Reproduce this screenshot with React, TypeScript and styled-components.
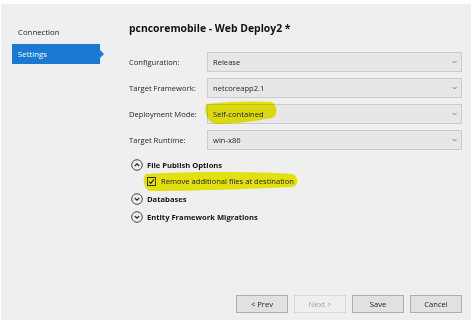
import React from 'react';
import styled, { createGlobalStyle } from 'styled-components';

const GlobalStyle = createGlobalStyle`
  html, body {
    margin: 0;
    padding: 0;
    background: #ffffff;
  }
  body {
    font-family: 'Open Sans', 'Noto Sans', sans-serif;
    color: #1a1a1a;
  }
`;

const Page = styled.div`
  position: relative;
  width: 474px;
  height: 323px;
  padding: 4px 3px 3px 1px;
  box-sizing: border-box;
`;

const Window = styled.div`
  display: grid;
  grid-template-columns: 110px 1fr;
  height: 100%;
  background: #efefef;
`;

const Sidebar = styled.nav`
  display: flex;
  flex-direction: column;
  gap: 2px;
  padding: 18px 0 0 11px;
`;

const NavItem = styled.div<{ $active?: boolean }>`
  position: relative;
  width: 88px;
  height: 20px;
  display: flex;
  align-items: center;
  padding-left: 6px;
  box-sizing: border-box;
  font-size: 7.8px;
  color: ${(p) => (p.$active ? '#ffffff' : '#222222')};
  background: ${(p) => (p.$active ? '#1a7ad2' : 'transparent')};

  &::after {
    content: '';
    display: ${(p) => (p.$active ? 'block' : 'none')};
    position: absolute;
    right: -4px;
    top: 6px;
    border-left: 4px solid #1a7ad2;
    border-top: 4px solid transparent;
    border-bottom: 4px solid transparent;
  }
`;

const Main = styled.main`
  display: flex;
  flex-direction: column;
  padding: 18px 9px 7px 18px;
`;

const Title = styled.h1`
  margin: 0 0 18px;
  font-size: 10.4px;
  font-weight: 700;
  line-height: 12px;
  color: #111111;
`;

const Form = styled.div`
  display: grid;
  grid-template-columns: 78px 1fr;
  row-gap: 6px;
  align-items: center;
`;

const Label = styled.label`
  font-size: 7.6px;
  color: #1e1e1e;
`;

const Select = styled.div`
  height: 20px;
  display: flex;
  align-items: center;
  justify-content: space-between;
  padding: 0 5px;
  box-sizing: border-box;
  background: #e7e7e7;
  border: 1px solid #cccccc;
  font-size: 7.6px;
  color: #1e1e1e;
`;

const Chevron = styled.svg`
  width: 5px;
  height: 4px;
  margin-right: -1px;
`;

const Sections = styled.div`
  display: flex;
  flex-direction: column;
  margin-top: 6px;
`;

const SectionHeader = styled.div`
  display: flex;
  align-items: center;
  gap: 4px;
  height: 18px;
  padding-left: 2px;
  font-size: 7.6px;
  font-weight: 700;
  color: #141414;
`;

const CheckRow = styled.div`
  display: flex;
  align-items: center;
  gap: 5px;
  height: 14px;
  margin-bottom: 2px;
  padding-left: 18px;
  font-size: 7.6px;
  color: #1e1e1e;
`;

const Box = styled.span`
  width: 7px;
  height: 7px;
  border: 1px solid #333333;
  display: flex;
  align-items: center;
  justify-content: center;
`;

const Footer = styled.div`
  margin-top: auto;
  display: flex;
  justify-content: flex-end;
  gap: 6px;
`;

const Button = styled.button<{ $disabled?: boolean }>`
  width: 52px;
  height: 18px;
  padding: 0;
  font-family: inherit;
  font-size: 7.6px;
  background: ${(p) => (p.$disabled ? '#efefef' : '#e1e1e1')};
  border: 1px solid ${(p) => (p.$disabled ? '#d9d9d9' : '#adadad')};
  color: ${(p) => (p.$disabled ? '#a3a3a3' : '#1a1a1a')};
`;

const Highlights = styled.svg`
  position: absolute;
  left: 0;
  top: 0;
  width: 474px;
  height: 323px;
  pointer-events: none;
  mix-blend-mode: multiply;
`;

function Expander({ open }: { open?: boolean }) {
  return (
    <svg width="12" height="12" viewBox="0 0 12 12">
      <circle cx="6" cy="6" r="5.3" fill="none" stroke="#333" strokeWidth="0.9" />
      <path
        d={open ? 'M3.8 7 L6 4.8 L8.2 7' : 'M3.8 5 L6 7.2 L8.2 5'}
        fill="none"
        stroke="#222"
        strokeWidth="1.1"
      />
    </svg>
  );
}

const rows = [
  { label: 'Configuration:', value: 'Release' },
  { label: 'Target Framework:', value: 'netcoreapp2.1' },
  { label: 'Deployment Mode:', value: 'Self-contained' },
  { label: 'Target Runtime:', value: 'win-x86' },
];

export default function App() {
  return (
    <Page>
      <GlobalStyle />
      <Window>
        <Sidebar>
          <NavItem>Connection</NavItem>
          <NavItem $active>Settings</NavItem>
        </Sidebar>
        <Main>
          <Title>pcncoremobile - Web Deploy2 *</Title>
          <Form>
            {rows.map((r) => (
              <React.Fragment key={r.label}>
                <Label>{r.label}</Label>
                <Select>
                  <span>{r.value}</span>
                  <Chevron viewBox="0 0 5 4">
                    <path d="M0.5 1 L2.5 3 L4.5 1" fill="none" stroke="#777" strokeWidth="0.9" />
                  </Chevron>
                </Select>
              </React.Fragment>
            ))}
          </Form>
          <Sections>
            <SectionHeader>
              <Expander open />
              File Publish Options
            </SectionHeader>
            <CheckRow>
              <Box>
                <svg width="7" height="7" viewBox="0 0 7 7">
                  <path d="M1 3.6 L2.8 5.4 L6 1.4" fill="none" stroke="#222" strokeWidth="1.1" />
                </svg>
              </Box>
              Remove additional files at destination
            </CheckRow>
            <SectionHeader>
              <Expander />
              Databases
            </SectionHeader>
            <SectionHeader>
              <Expander />
              Entity Framework Migrations
            </SectionHeader>
          </Sections>
          <Footer>
            <Button>&lt; Prev</Button>
            <Button $disabled>Next &gt;</Button>
            <Button>Save</Button>
            <Button>Cancel</Button>
          </Footer>
        </Main>
      </Window>
      <Highlights viewBox="0 0 474 323">
        <path
          d="M206 104 C230 101 258 101 271 102 C278 104 278 116 272 118 C255 121 235 124 215 124 C207 122 203 110 206 104 Z"
          fill="#f2ef10"
        />
        <path
          d="M146 174 C200 171 262 172 292 174 C299 176 299 186 292 187 C250 189 190 191 150 191 C143 189 142 176 146 174 Z"
          fill="#f2ef10"
        />
      </Highlights>
    </Page>
  );
}
